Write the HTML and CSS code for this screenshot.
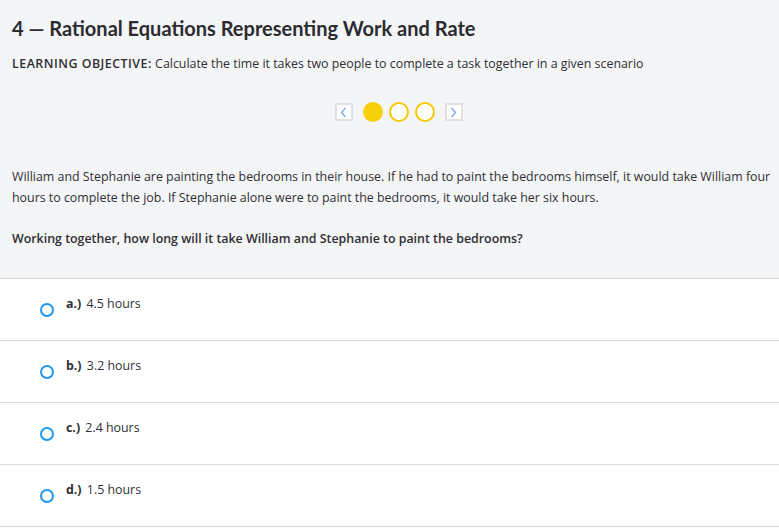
FILE: index.html
```html
<!DOCTYPE html>
<html>
<head>
<meta charset="utf-8">
<link rel="stylesheet" href="styles.css">
</head>
<body>
<div class="page">
  <section class="top">
    <h1 class="title">4 — Rational Equations Representing Work and Rate</h1>
    <p class="objective"><span class="obj-label">LEARNING OBJECTIVE:</span> Calculate the time it takes two people to complete a task together in a given scenario</p>
    <div class="nav">
      <span class="arrow"><svg width="9" height="11" viewBox="0 0 9 11"><path d="M6.5 1 L2.5 5.5 L6.5 10" fill="none" stroke="#6ea6f5" stroke-width="1.2"/></svg></span>
      <span class="dot filled"></span>
      <span class="dot"></span>
      <span class="dot"></span>
      <span class="arrow"><svg width="9" height="11" viewBox="0 0 9 11"><path d="M2.5 1 L6.5 5.5 L2.5 10" fill="none" stroke="#6ea6f5" stroke-width="1.2"/></svg></span>
    </div>
    <p class="scenario">William and Stephanie are painting the bedrooms in their house. If he had to paint the bedrooms himself, it would take William four hours to complete the job. If Stephanie alone were to paint the bedrooms, it would take her six hours.</p>
    <p class="question">Working together, how long will it take William and Stephanie to paint the bedrooms?</p>
  </section>
  <ul class="options">
    <li class="option"><span class="radio"></span><span class="label"><b>a.)</b> 4.5 hours</span></li>
    <li class="option"><span class="radio"></span><span class="label"><b>b.)</b> 3.2 hours</span></li>
    <li class="option"><span class="radio"></span><span class="label"><b>c.)</b> 2.4 hours</span></li>
    <li class="option"><span class="radio"></span><span class="label"><b>d.)</b> 1.5 hours</span></li>
  </ul>
</div>
</body>
</html>
```
FILE: styles.css
```css
* { box-sizing: border-box; }
html, body { margin: 0; padding: 0; background: #fff; }
body {
  font-family: "Open Sans", "Lato", sans-serif;
  color: #2f2f33;
  width: 779px;
  overflow: hidden;
}
.page { width: 800px; }
.top {
  background: #f4f5f7;
  padding: 14px 12px 0 12px;
  height: 279px;
  border-bottom: 1px solid #d8d9db;
}
.title {
  margin: 0;
  font-family: "Lato", sans-serif;
  font-size: 20px;
  font-weight: 700;
  line-height: 28px;
  color: #2b2b30;
}
.objective {
  margin: 13px 0 0 0;
  font-size: 12.4px;
  line-height: 18px;
}
.obj-label { font-weight: 600; letter-spacing: 0.5px; }
.nav {
  display: flex;
  align-items: center;
  justify-content: center;
  gap: 6px;
  margin-top: 29px;
  padding-right: 3px;
  height: 20px;
}
.arrow {
  width: 18px;
  height: 18px;
  border: 2px solid #e0e1e3;
  background: #fff;
  display: flex;
  align-items: center;
  justify-content: center;
  margin: 0 4px;
}
.dot {
  width: 20px;
  height: 20px;
  border-radius: 50%;
  border: 2px solid #f5c800;
  background: #fff;
}
.dot.filled { background: #f7cf0b; border-color: #f7cf0b; }
.scenario {
  margin: 44px 0 0 0;
  font-size: 12.4px;
  line-height: 21px;
}
.question {
  margin: 20px 0 0 0;
  font-size: 12.4px;
  line-height: 21px;
  font-weight: 600;
}
.options { list-style: none; margin: 0; padding: 0; }
.option {
  height: 62px;
  border-bottom: 1px solid #d8d9db;
  display: flex;
  align-items: flex-start;
  padding-left: 40px;
  padding-top: 17px;
}
.radio {
  width: 14px;
  height: 14px;
  border: 2px solid #1f9af0;
  border-radius: 50%;
  margin-top: 7px;
  flex: none;
}
.label {
  margin-left: 12px;
  font-size: 12.4px;
  line-height: 16px;
}
.label b { font-weight: 700; margin-right: 2px; }
```
